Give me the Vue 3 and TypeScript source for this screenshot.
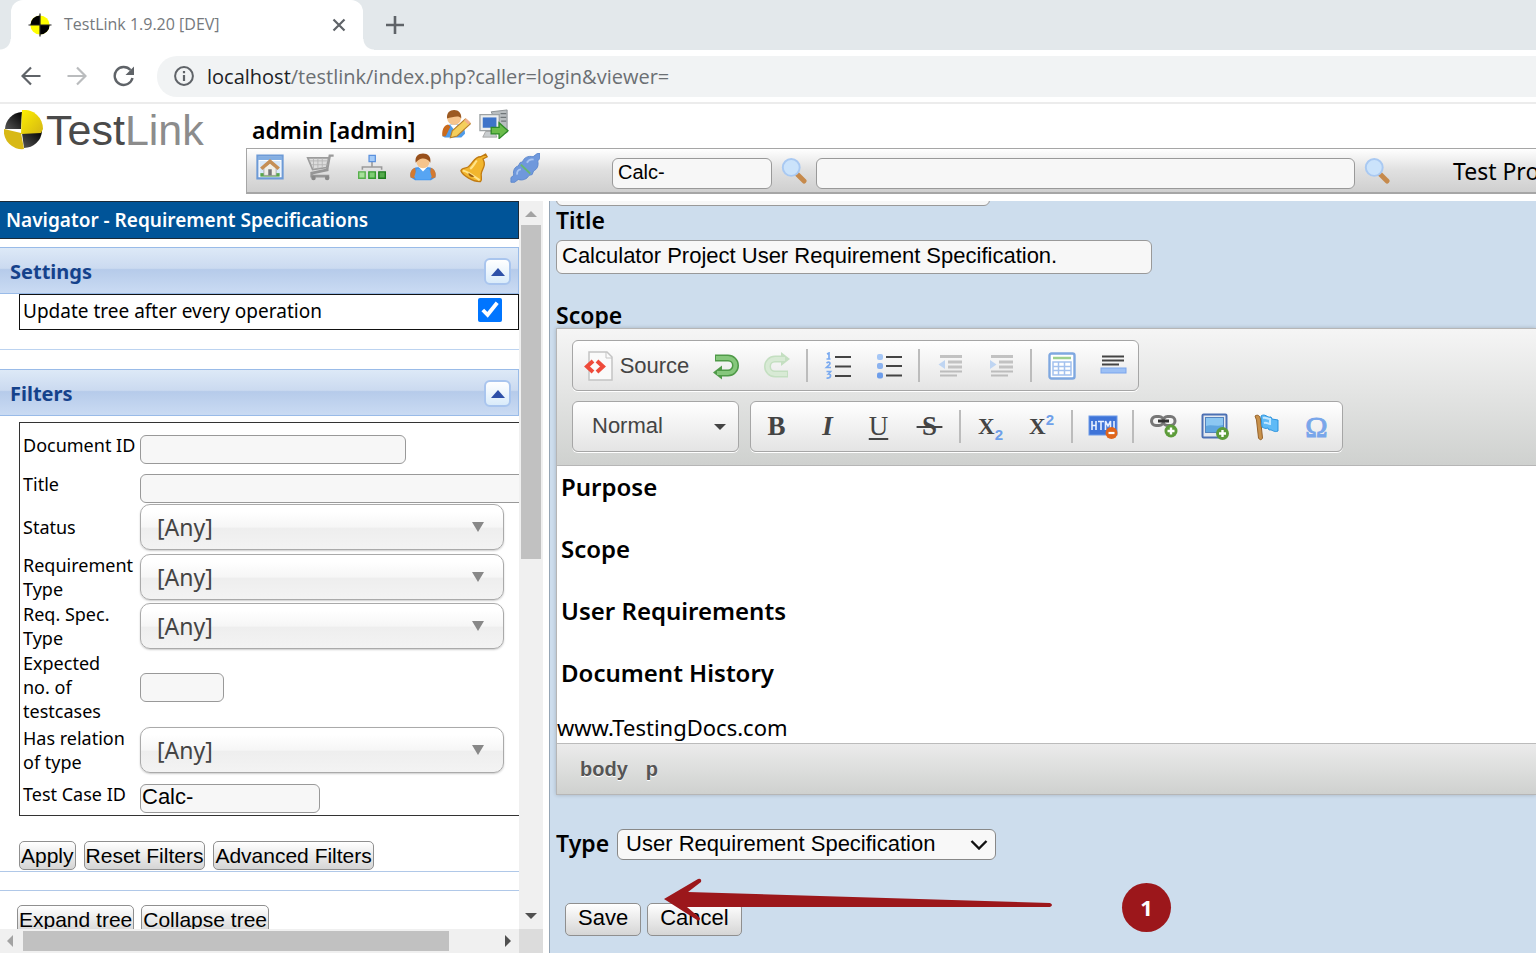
<script setup lang="ts">
import { ref } from 'vue'

interface FilterRow {
  id: string
  label: string
  kind: 'text' | 'select'
  size?: string
  tall?: boolean
}

const filterRows: FilterRow[] = [
  { id: 'doc-id', label: 'Document ID', kind: 'text', size: 'medium' },
  { id: 'req-title', label: 'Title', kind: 'text', size: 'wide' },
  { id: 'status', label: 'Status', kind: 'select' },
  { id: 'req-type', label: 'Requirement Type', kind: 'select' },
  { id: 'spec-type', label: 'Req. Spec. Type', kind: 'select' },
  { id: 'coverage', label: 'Expected no. of testcases', kind: 'text', size: 'tiny', tall: true },
  { id: 'relation', label: 'Has relation of type', kind: 'select' },
  { id: 'tc-id', label: 'Test Case ID', kind: 'text', size: 'small' },
]

const values = ref<Record<string, string>>({
  'doc-id': '', 'req-title': '', status: '[Any]', 'req-type': '[Any]',
  'spec-type': '[Any]', coverage: '', relation: '[Any]', 'tc-id': 'Calc-',
})

const updateTree = ref(true)
const quickSearch = ref('Calc-')
const fullSearch = ref('')
const docId = ref('')
const specTitle = ref('Calculator Project User Requirement Specification.')
const specType = ref('User Requirement Specification')
const headings = ['Purpose', 'Scope', 'User Requirements', 'Document History']
</script>

<template>
  <div class="page">
    <div class="tabstrip">
      <div class="tab">
        <svg class="favicon" viewBox="0 0 24 24" width="24" height="24">
          <circle cx="12" cy="12" r="9.6" fill="#ff0" />
          <path d="M12 12V2.4A9.6 9.6 0 0 0 2.4 12zM12 12v9.6a9.6 9.6 0 0 0 9.600-9.600z" fill="#000" />
          <path d="M12 .5v23M.5 12h23" stroke="#222" stroke-width="1.200" />
        </svg>
        <span class="tab-title">TestLink 1.9.20 [DEV]</span>
        <button class="bare" aria-label="Close tab">
          <svg viewBox="0 0 14 14" width="14" height="14"><path d="M1.500 1.500l11 11M12.500 1.500l-11 11" stroke="#5f6368" stroke-width="2.200" /></svg>
        </button>
      </div>
      <button class="bare new-tab" aria-label="New tab">
        <svg viewBox="0 0 18 18" width="18" height="18"><path d="M9 0v18M0 9h18" stroke="#5f6368" stroke-width="2.600" /></svg>
      </button>
    </div>

    <div class="addressbar">
      <button class="bare" aria-label="Back">
        <svg viewBox="0 0 20 20" width="20" height="20"><path d="M19.500 10H2M10 1.500L1.500 10l8.500 8.500" fill="none" stroke="#5f6368" stroke-width="2.200" /></svg>
      </button>
      <button class="bare" aria-label="Forward">
        <svg viewBox="0 0 20 20" width="20" height="20"><path d="M.5 10H18M10 1.500l8.500 8.500-8.500 8.500" fill="none" stroke="#babcbe" stroke-width="2.200" /></svg>
      </button>
      <button class="bare" aria-label="Reload">
        <svg viewBox="0 0 22 22" width="22" height="22">
          <path d="M17.500 5A9 9 0 1 0 19.500 13" fill="none" stroke="#5f6368" stroke-width="2.400" />
          <path d="M21 1.500V10h-8.500z" fill="#5f6368" />
        </svg>
      </button>
      <div class="omnibox">
        <svg viewBox="0 0 20 20" width="20" height="20">
          <circle cx="10" cy="10" r="8.900" fill="none" stroke="#5f6368" stroke-width="2" />
          <path d="M10 9v6M10 5v2.200" stroke="#5f6368" stroke-width="2.200" />
        </svg>
        <span class="url"><b>localhost</b>/testlink/index.php?caller=login&amp;viewer=</span>
      </div>
    </div>

    <header class="masthead">
      <div class="logo">
        <svg viewBox="0 0 40 40" width="40" height="40">
          <defs>
            <linearGradient id="lgY" x1="0" y1="0" x2="1" y2="1"><stop offset="0" stop-color="#fff000" /><stop offset="1" stop-color="#d3b514" /></linearGradient>
            <linearGradient id="lgK" x1="0" y1="1" x2="1" y2="0"><stop offset="0" stop-color="#555" /><stop offset="1" stop-color="#000" /></linearGradient>
          </defs>
          <path d="M17 19L18 2A18 18 0 0 0 1 19z" fill="url(#lgK)" />
          <path d="M18 23l20-2A18 18 0 0 1 20 38z" fill="url(#lgK)" />
          <path d="M18 0a19 19 0 0 1 21 19l-2 4-20 1z" fill="url(#lgY)" />
          <path d="M0 19l17 4 3 16A18 18 0 0 1 0 19z" fill="#d8b916" />
        </svg>
        <span class="wordmark">Test<i>Link</i></span>
      </div>
      <div class="head-main">
        <div class="who">
          <strong>admin [admin]</strong>
          <a href="#profile" aria-label="My settings">
            <svg viewBox="0 0 16 16" width="30" height="30">
              <path d="M.8 14.500c0-4 1.800-6.300 4.500-6.300h4c2 0 3.500 2 3.500 5l-2 2H2z" fill="#4f9be8" />
              <path d="M.8 14.500c-.6-3 .7-6 3-6.300l1.200 1.300-2.500 5z" fill="#c96a1c" />
              <path d="M5 8.500l2 2.500 2-2.500z" fill="#fff" />
              <circle cx="7" cy="4.800" r="3.700" fill="#f6c48c" />
              <path d="M3.200 5C3 2 4.600.5 7 .5s4 1.600 3.800 4.500C9.500 3 6 4.500 3.200 5z" fill="#9c5a22" />
              <path d="M5 15.300l1-3.700 7-6.200 2.600 2.500-7 6.500z" fill="#f5cf5c" stroke="#b9812c" stroke-width=".6" />
              <path d="M12.300 6l1.200-1 2.300 2.200-1.200 1.200z" fill="#f3b08a" />
            </svg>
          </a>
          <a href="#logout" aria-label="Logout">
            <svg viewBox="0 0 16 16" width="30" height="30">
              <path d="M6.500 1.500L15 .5v12l-3 1z" fill="#b9bec0" stroke="#8b9092" stroke-width=".5" />
              <path d="M11.500 2.500h3M11.500 4.500h3M11.800 6.500h2.700" stroke="#6f7678" stroke-width=".7" />
              <path d="M.5 3h10.300v8.500H.5z" fill="#eceeee" stroke="#9da2a4" stroke-width=".7" />
              <path d="M2 4.500h7.300V10H2z" fill="#3e74c9" />
              <path d="M3.500 12h5l1 3H2z" fill="#c9cdcf" stroke="#999" stroke-width=".4" />
              <path d="M6.500 9.800h4.200V7.300l4.800 4.300-4.800 4.200v-2.500H6.500z" fill="#6bbc4b" stroke="#2e8b28" stroke-width=".7" />
            </svg>
          </a>
        </div>
        <nav class="menubar">
          <a href="#home" aria-label="Home">
            <svg viewBox="0 0 16 16" width="28" height="28">
              <path d="M.8 1.500h14.400v13H.8z" fill="#fff" stroke="#6d9ad6" stroke-width="1.200" />
              <path d="M1 2h14v2H1z" fill="#83aee2" />
              <path d="M2 4.500h12v8.800H2z" fill="#d8e9fb" /><path d="M2.500 11.500h11v2h-11z" fill="#57a64a" />
              <path d="M4.500 8.500L8 5.500l3.500 3v4.300h-7z" fill="#f1efe8" stroke="#999" stroke-width=".4" />
              <path d="M3 9L8 4.800 13 9" fill="none" stroke="#c58f56" stroke-width="2" />
              <path d="M7 9.300h2v3.500H7z" fill="#777" />
            </svg>
          </a>
          <a href="#specification" aria-label="Test specification">
            <svg viewBox="0 0 16 16" width="29" height="28">
              <path d="M15.500 1.500h-2.200L11.800 9.500" fill="none" stroke="#9a9a9a" stroke-width="1.400" />
              <path d="M.7 2.800h12l-1.200 5.500-8 1.200z" fill="#dcdcdc" stroke="#9c9c9c" />
              <path d="M1.500 4.500h11M2.500 6.700h9.500M4 3v6M6.500 3v6M9 3v5.500" stroke="#b5b5b5" stroke-width=".5" />
              <path d="M12.500 9.500L3 11.500v1.700h10" fill="none" stroke="#969696" stroke-width="1.600" />
              <circle cx="4" cy="14.300" r="1.300" fill="#888" /><circle cx="11.800" cy="14.300" r="1.300" fill="#888" />
            </svg>
          </a>
          <a href="#plan" aria-label="Test plan tree">
            <svg viewBox="0 0 16 16" width="30" height="28">
              <path d="M8 5v3M2.500 9.500V8h11v1.500" fill="none" stroke="#9a9a9a" stroke-width=".9" />
              <path d="M6.300 1.300h3.600v3.600H6.300z" fill="#a4cbf8" stroke="#5b91dd" stroke-width=".7" />
              <path d="M.4 10.800h3.700v3.600H.4z" fill="#a9e09c" stroke="#57b04c" stroke-width=".8" />
              <path d="M6.200 10.800h3.700v3.600H6.200z" fill="#7fcc74" stroke="#349a2e" stroke-width=".8" />
              <path d="M11.900 10.800h3.700v3.600h-3.700z" fill="#55ab4c" stroke="#1d7a1c" stroke-width=".8" />
            </svg>
          </a>
          <a href="#users" aria-label="User management">
            <svg viewBox="0 0 16 16" width="28" height="28">
              <path d="M1 14c-.8-3 1-5.500 3.800-5.800h6.400C14 8.500 15.800 11 15 14l-2.500 1.500h-9z" fill="#4195ee" />
              <path d="M.9 14C.2 11.200 1.500 9 3.500 8.400L4 12l-.5 2.600zM15.100 14c.7-2.800-.6-5-2.600-5.600L12 12l.5 2.600z" fill="#d47a30" />
              <path d="M3 13.500L4.500 9h7l1.500 4.500-1 1.700H4z" fill="#57a5f3" />
              <path d="M5.500 8L8 10.500 10.500 8z" fill="#fff" />
              <circle cx="8" cy="4.900" r="3.800" fill="#f6c48c" />
              <path d="M3.800 5.500C3.300 2 5.200.3 8 .3s4.700 1.700 4.200 5.200C11 3.500 9 3 7.500 3.200 6 3.400 4.800 4.500 3.800 5.500z" fill="#98501b" />
            </svg>
          </a>
          <a href="#events" aria-label="Events">
            <svg viewBox="0 0 16 16" width="30" height="30">
              <path d="M14.200.6L11.500 2C8 2 7.500 5.500 5 7.300 3.500 8.300 1.300 8 1 9.500c1 2.500 6.500 6 10.500 5.700 1.200-1-.2-3 .5-4.800.8-2.500 2.500-4 .8-7.200L15 2z" fill="#f2b62d" stroke="#c07a12" stroke-width=".7" />
              <path d="M2 9.300c2 .3 6 3 9 5.200M9.500 4C8 6 7.500 7.300 6 8.500" fill="none" stroke="#ffe48a" stroke-width="1.100" />
              <path d="M5 10.500c0 2 2 2.700 3.200 2z" fill="#9b5d10" />
            </svg>
          </a>
          <a href="#plugins" aria-label="Plugins">
            <svg viewBox="0 0 16 16" width="30" height="30">
              <path d="M.5 15.600v-2.500l1.500-1.200c-.6-2.600.6-4.500 2.400-5L5.500 5l1.200-.2C7.300 2.500 9.800 1.300 12.300 2L14.500.3 16 .2v2.600l-1.200 1.400c.6 2.600-.4 4.600-2.200 5.300l-.8 2-1.700.4c-.8 2-3.500 3-5.700 2.200L2.500 15.600z" fill="#6f98dc" stroke="#5c87cd" stroke-width=".5" />
              <path d="M5.800 6.200l5 4.800" stroke="#66b871" stroke-width="1.100" />
              <path d="M9 5.200c.9-1.600 2.200-2 3.600-1.700M3.800 11.500c-.2-1.800.7-2.700 2-2.800" stroke="#a9c5f1" fill="none" />
            </svg>
          </a>
          <div class="searches">
            <input v-model="quickSearch" class="quick" aria-label="Test case identifier" />
            <button class="bare" aria-label="Search test case">
              <svg viewBox="0 0 16 16" width="26" height="26">
                <path d="M10 10l4.200 4.200" stroke="#c68a4c" stroke-width="3" stroke-linecap="round" />
                <circle cx="6.300" cy="5.800" r="5.200" fill="#cbe3fb" stroke="#a9c9f2" stroke-width="1.200" />
              </svg>
            </button>
            <input v-model="fullSearch" class="full" aria-label="Full text search" />
            <button class="bare" aria-label="Search text">
              <svg viewBox="0 0 16 16" width="26" height="26">
                <path d="M10 10l4.200 4.200" stroke="#c68a4c" stroke-width="3" stroke-linecap="round" />
                <circle cx="6.300" cy="5.800" r="5.200" fill="#cbe3fb" stroke="#a9c9f2" stroke-width="1.200" />
              </svg>
            </button>
          </div>
          <span class="project">Test Project</span>
        </nav>
      </div>
    </header>

    <main class="frames">
      <section class="nav-frame">
        <div class="nav-scroll">
          <h1>Navigator - Requirement Specifications</h1>
          <div class="panel-head">
            <h2>Settings</h2>
            <button aria-label="Collapse settings"><svg viewBox="0 0 14 8" width="14" height="8"><path d="M0 8l7-8 7 8z" fill="#2e50a8" /></svg></button>
          </div>
          <div class="settings-box">
            <label for="update-tree">Update tree after every operation</label>
            <input id="update-tree" v-model="updateTree" type="checkbox" />
          </div>
          <div class="panel-gap"></div>
          <div class="panel-head filters-head">
            <h2>Filters</h2>
            <button aria-label="Collapse filters"><svg viewBox="0 0 14 8" width="14" height="8"><path d="M0 8l7-8 7 8z" fill="#2e50a8" /></svg></button>
          </div>
          <div class="filter-box">
            <div v-for="row in filterRows" :key="row.id" class="frow" :class="[row.kind, { tall: row.tall }]">
              <label :for="row.id">{{ row.label }}</label>
              <input v-if="row.kind === 'text'" :id="row.id" v-model="values[row.id]" :class="row.size" />
              <div v-else class="chosen">
                <select :id="row.id" v-model="values[row.id]"><option>[Any]</option></select>
                <svg viewBox="0 0 12 10" width="12" height="10"><path d="M0 0h12L6 10z" fill="#888" /></svg>
              </div>
            </div>
          </div>
          <div class="actions">
            <button class="btn">Apply</button>
            <button class="btn">Reset Filters</button>
            <button class="btn">Advanced Filters</button>
          </div>
          <div class="tree-actions">
            <button class="btn">Expand tree</button>
            <button class="btn">Collapse tree</button>
          </div>
        </div>
        <div class="vbar">
          <svg viewBox="0 0 12 6" width="12" height="6"><path d="M0 6l6-6 6 6z" fill="#a3a3a3" /></svg>
          <div class="vthumb"></div>
          <svg viewBox="0 0 12 6" width="12" height="6"><path d="M0 0h12L6 6z" fill="#505050" /></svg>
        </div>
        <div class="hbar">
          <svg viewBox="0 0 6 12" width="6" height="12"><path d="M6 0v12L0 6z" fill="#a3a3a3" /></svg>
          <div class="htrack"><div class="hthumb"></div></div>
          <svg viewBox="0 0 6 12" width="6" height="12"><path d="M0 0v12l6-6z" fill="#505050" /></svg>
        </div>
        <div class="corner"></div>
      </section>

      <section class="work-frame">
        <input v-model="docId" class="field doc" aria-label="Document ID" />
        <label class="flabel" for="spec-title">Title</label>
        <input id="spec-title" v-model="specTitle" class="field title" />
        <span class="flabel scope">Scope</span>

        <div class="editor">
          <div class="tools">
            <div class="group">
              <button class="tool source">
                <svg viewBox="0 0 30 30" width="30" height="30">
                  <path d="M5 1h18l5 5v23H5z" fill="#fafafa" stroke="#c4c4c4" stroke-width="1.500" /><path d="M22 1v6h6" fill="none" stroke="#c4c4c4" />
                  <path d="M9 10l-6 5.500L9 21M13 10l6 5.500-6 5.500" fill="none" stroke="#ee4a3a" stroke-width="4" />
                </svg>
                <span>Source</span>
              </button>
              <button class="tool" aria-label="Undo">
                <svg viewBox="0 0 28 28" width="28" height="28">
                  <path d="M3 6h13a7.500 7.500 0 0 1 0 15H8" fill="none" stroke="#4f9a48" stroke-width="7" />
                  <path d="M10 13.500v14L1 20.500z" fill="#4f9a48" />
                  <path d="M4 6h12a7.500 7.500 0 0 1 0 15H5" fill="none" stroke="#86c77c" stroke-width="4" />
                </svg>
              </button>
              <button class="tool" aria-label="Redo">
                <svg viewBox="0 0 28 28" width="28" height="28">
                  <path d="M25 22H12a7.500 7.500 0 0 1 0-15h8" fill="none" stroke="#c4dfc1" stroke-width="7" />
                  <path d="M18 0v14l9-7z" fill="#c4dfc1" />
                  <path d="M24 22H12a7.500 7.500 0 0 1 0-15h10" fill="none" stroke="#d8ead5" stroke-width="4" />
                </svg>
              </button>
              <span class="sep"></span>
              <button class="tool" aria-label="Numbered list">
                <svg viewBox="0 0 28 28" width="28" height="28">
                  <path d="M11 5h16M11 14.500h16M11 24h16" stroke="#444" stroke-width="2.200" />
                  <path d="M3 2l2-1v6M2.500 7h4M2.500 11c3-2 4 0 3 1.500l-3 3H7M2.500 19.500h4L4.500 22c3-.2 3 4.500-2 4" fill="none" stroke="#7aaaf0" stroke-width="1.700" />
                </svg>
              </button>
              <button class="tool" aria-label="Bulleted list">
                <svg viewBox="0 0 28 28" width="28" height="28">
                  <path d="M11 5h16M11 14h16M11 23.500h16" stroke="#444" stroke-width="2.200" />
                  <rect x="2" y="2" width="6" height="6" rx="2" fill="#a6c7f6" /><rect x="2" y="11" width="6" height="6" rx="2" fill="#8bb2ef" /><rect x="2" y="20.500" width="6" height="6" rx="2" fill="#6d9dea" />
                </svg>
              </button>
              <span class="sep"></span>
              <button class="tool" aria-label="Decrease indent">
                <svg viewBox="0 0 28 28" width="28" height="28">
                  <path d="M4 4.500h22M12 10h14M12 15h14" stroke="#c2c2c2" stroke-width="3" /><path d="M4 19.500h22M4 23.500h17" stroke="#bcbcbc" stroke-width="2" /><path d="M9 8v9l-6.500-4.500z" fill="#bfd5f2" />
                </svg>
              </button>
              <button class="tool" aria-label="Increase indent">
                <svg viewBox="0 0 28 28" width="28" height="28">
                  <path d="M4 4.500h22M12 10h14M12 15h14" stroke="#c2c2c2" stroke-width="3" /><path d="M4 19.500h22M4 23.500h17" stroke="#bcbcbc" stroke-width="2" /><path d="M3 8v9l6.500-4.500z" fill="#bfd5f2" />
                </svg>
              </button>
              <span class="sep"></span>
              <button class="tool" aria-label="Table">
                <svg viewBox="0 0 28 28" width="28" height="28">
                  <rect x="1.500" y="1.500" width="25" height="25" rx="2" fill="#fff" stroke="#7fa8e0" stroke-width="2.400" />
                  <path d="M5 6h18" stroke="#9ed08f" stroke-width="2.500" />
                  <path d="M5 10h18v13H5zM5 14.500h18M5 18.500h18M10.500 10v13M16.500 10v13" fill="none" stroke="#a3c1ee" stroke-width="1.500" />
                </svg>
              </button>
              <button class="tool" aria-label="Horizontal line">
                <svg viewBox="0 0 28 28" width="28" height="28">
                  <path d="M3 4.500h22M3 8.500h22M3 12.500h17" stroke="#444" stroke-width="2.200" />
                  <rect x="2" y="16" width="25" height="5" fill="#9cc0f5" stroke="#7ba5ec" />
                </svg>
              </button>
            </div>
            <div class="tool-row">
              <div class="group format">
                <select aria-label="Paragraph format"><option>Normal</option></select>
                <svg viewBox="0 0 12 6" width="12" height="6"><path d="M0 0h12L6 6z" fill="#444" /></svg>
              </div>
              <div class="group">
                <button class="tool glyph"><b>B</b></button>
                <button class="tool glyph"><em>I</em></button>
                <button class="tool glyph"><u>U</u></button>
                <button class="tool glyph"><s>&thinsp;S&thinsp;</s></button>
                <span class="sep"></span>
                <button class="tool glyph"><b class="script">X<sub>2</sub></b></button>
                <button class="tool glyph"><b class="script">X<sup>2</sup></b></button>
                <span class="sep"></span>
                <button class="tool" aria-label="Remove format">
                  <svg viewBox="0 0 30 28" width="30" height="28">
                    <rect x="1" y="3" width="28" height="19" fill="#3f74d8" stroke="#6c9ae8" />
                    <path d="M4 8v9M8 8v9M4 12.500h4M10 8.500h6M13 8v9M17.500 17V8l2.500 5 2.500-5v9M26 8v9" fill="none" stroke="#e8f0ff" stroke-width="1.600" />
                    <circle cx="23.500" cy="20" r="6" fill="#e0651b" /><path d="M20.500 20h6" stroke="#fff" stroke-width="2.200" />
                  </svg>
                </button>
                <span class="sep"></span>
                <button class="tool" aria-label="Link">
                  <svg viewBox="0 0 28 28" width="28" height="28">
                    <rect x="1.500" y="3.500" width="12" height="9" rx="4.500" fill="none" stroke="#777" stroke-width="3" />
                    <rect x="13" y="3.500" width="12" height="9" rx="4.500" fill="none" stroke="#777" stroke-width="3" />
                    <path d="M8 8h11" stroke="#333" stroke-width="3" />
                    <circle cx="21" cy="18" r="6.500" fill="#5d9c3a" /><path d="M21 14.500v7M17.500 18h7" stroke="#fff" stroke-width="2.400" />
                  </svg>
                </button>
                <button class="tool" aria-label="Image">
                  <svg viewBox="0 0 28 28" width="28" height="28">
                    <rect x="1.500" y="1.500" width="24" height="23" rx="1" fill="#e4e8ef" stroke="#4c70b3" stroke-width="2" />
                    <rect x="4.500" y="4.500" width="18" height="15" fill="#8cc7f2" stroke="#5484bf" /><path d="M5 13c5-2 11 1 17-1v7H5z" fill="#5fa5df" />
                    <circle cx="21.500" cy="20.500" r="6.500" fill="#5d9c3a" /><path d="M21.500 17v7M18 20.500h7" stroke="#fff" stroke-width="2.400" />
                  </svg>
                </button>
                <button class="tool" aria-label="Anchor">
                  <svg viewBox="0 0 28 28" width="28" height="28">
                    <path d="M3 3c3-2 5 0 5.500 3l2 19c-1 2.500-3 2-4 0l-2-18z" fill="#c8914b" stroke="#96622a" />
                    <path d="M9 3c4-3 6 2 10 1l1 2 6 1v11c-4 2-6-2-9-1l-1-2c-3 1-4 0-6-1z" fill="#5fbaf6" stroke="#2a93de" />
                    <path d="M11 5c3-1 4 1 7 1v6M12 10c3-1 4 1 6 1" stroke="#c2e7ff" fill="none" stroke-width="2" />
                  </svg>
                </button>
                <button class="tool glyph omega" aria-label="Special character">Ω</button>
              </div>
            </div>
          </div>
          <article class="document">
            <h3 v-for="h in headings" :key="h">{{ h }}</h3>
            <p>www.TestingDocs.com</p>
          </article>
          <div class="path"><a href="#body">body</a><a href="#p">p</a></div>
        </div>

        <div class="type-row">
          <label for="spec-kind">Type</label>
          <div class="kind">
            <select id="spec-kind" v-model="specType"><option>User Requirement Specification</option></select>
            <svg viewBox="0 0 18 10" width="18" height="10"><path d="M1.500 1l7.500 7.500L16.500 1" fill="none" stroke="#111" stroke-width="2.400" /></svg>
          </div>
        </div>
        <div class="form-actions">
          <button class="btn big">Save</button>
          <button class="btn big">Cancel</button>
          <svg class="arrow" viewBox="0 0 392 44" width="392" height="44">
            <path d="M1 21L35 1q4-1 3 3L25 14l362 11q4 2 0 4H24l13 11q0 4-3 2z" fill="#9c171b" />
          </svg>
          <span class="step">1</span>
        </div>
      </section>
    </main>
  </div>
</template>

<style>
body { margin: 0; overflow: hidden; background: #fff; }
</style>

<style scoped>
* { box-sizing: border-box; }
.page { display: flex; flex-direction: column; height: 100vh; padding-bottom: 8px; overflow: hidden; font-family: "Noto Sans", "Open Sans", sans-serif; font-size: 18px; color: #000; }
svg { display: block; flex: none; }
.bare { display: flex; padding: 0; border: 0; background: none; }
input, select, button { font-family: "Liberation Sans", Arial, sans-serif; color: #000; }
h1, h2, h3, p { margin: 0; }

.tabstrip { display: flex; align-items: stretch; height: 50px; padding-left: 11px; background: #e3e8eb; flex: none; }
.tab { position: relative; display: flex; align-items: center; width: 352px; padding: 0 17px; background: #fff; border-radius: 12px 12px 0 0; }
.tab::before, .tab::after { position: absolute; bottom: 0; width: 11px; height: 11px; content: ""; }
.tab::before { right: 100%; background: radial-gradient(circle at 0 0, #e3e8eb 10px, #fff 11px); }
.tab::after { left: 100%; background: radial-gradient(circle at 100% 0, #e3e8eb 10px, #fff 11px); }
.tab-title { flex: 1; margin-left: 12px; padding-bottom: 3px; font: 16px "Open Sans", sans-serif; color: #75797d; }
.new-tab { align-items: center; margin-left: 23px; }

.addressbar { display: flex; align-items: center; gap: 26px; height: 54px; padding-left: 21px; border-bottom: 2px solid #ececec; flex: none; }
.omnibox { display: flex; flex: 1; align-items: center; gap: 13px; height: 41px; margin-left: -4px; padding-left: 17px; background: #f1f3f4; border-radius: 20px 0 0 20px; }
.url { font: 20px "Open Sans", sans-serif; color: #6b6f73; white-space: nowrap; }
.url b { font-weight: 400; color: #202124; }

.masthead { display: flex; height: 97px; padding-bottom: 7px; flex: none; }
.logo { display: flex; align-items: flex-start; width: 246px; padding: 6px 0 0 4px; flex: none; }
.wordmark { margin-left: 2px; font: 43px/40px "Liberation Sans", Arial, sans-serif; color: #4a4a4a; }
.wordmark i { font-style: normal; color: #8c8c8c; }
.head-main { display: flex; flex: 1; flex-direction: column; min-width: 0; }
.who { display: flex; align-items: center; gap: 8px; height: 44px; padding-left: 6px; }
.who strong { margin-right: 18px; padding-top: 8px; font-size: 23px; font-weight: 600; line-height: 32px; }
.who a { margin-bottom: 4px; }
.menubar { display: flex; height: 46px; padding-left: 8px; overflow: hidden; border: 1px solid #a6a6a6; border-right: 0; border-bottom-width: 2px; background: linear-gradient(#fff, #e0e0e0 50%, #cfcfcf); }
.menubar > a { display: flex; justify-content: center; width: 51px; padding-top: 4px; flex: none; }
.menubar > a:first-child { width: 30px; margin-right: 10px; }
.searches { display: flex; flex: 1; gap: 9px; margin-left: 62px; padding-top: 9px; }
.searches input { height: 31px; padding: 0 5px 2px; border: 1px solid #999; border-radius: 6px; background: #f7f7f7; font-size: 20px; min-width: 0; }
.quick { width: 160px; flex: none; }
.full { flex: 1; }
.searches .bare { width: 26px; }
.project { flex: none; width: 83px; margin-left: 63px; font-size: 23px; line-height: 44px; white-space: nowrap; }

.frames { display: grid; flex: 1; grid-template-columns: minmax(0, 543fr) minmax(0, 987fr); gap: 6px; min-height: 0; }
.nav-frame { display: grid; grid-template: minmax(0, 1fr) 24px / minmax(0, 1fr) 24px; min-height: 0; }
.nav-scroll { overflow: hidden; }
h1 { height: 38px; padding-left: 6px; border: 1px solid #1b2a38; border-left: 0; background: #005498; color: #fff; font-size: 19px; font-weight: 600; line-height: 37px; white-space: nowrap; }
.panel-head { display: flex; align-items: center; justify-content: space-between; height: 47px; margin-top: 8px; padding: 2px 7px 0 10px; border: 1px solid #99bbe8; border-width: 1px 1px 1px 0; background: linear-gradient(#dde9f7, #cbdaf0 45%, #b6cbea 48%, #cadbf3); }
.panel-head h2 { font-size: 20px; font-weight: 700; color: #15428b; }
.panel-head button { display: flex; align-items: center; justify-content: center; width: 27px; height: 27px; padding: 0; border: 2px solid #a9c5ee; border-radius: 6px; background: linear-gradient(#fff, #d9ebfa); }
.settings-box { display: flex; align-items: center; justify-content: space-between; height: 36px; margin-left: 19px; padding: 0 16px 2px 3px; border: 1px solid #111; }
.settings-box label { font-size: 19px; }
.settings-box input { width: 24px; height: 24px; margin: 0 0 2px; accent-color: #0075ff; }
.panel-gap { height: 20px; border-bottom: 1px solid #bcd3f0; }
.filters-head { margin-top: 19px; }
.filter-box { display: flex; flex-direction: column; width: 640px; height: 394px; margin: 6px 0 0 19px; padding: 0 0 3px 3px; border: 1px solid #333; }
.frow { display: grid; grid-template-columns: 115px 1fr; align-items: center; gap: 2px; height: 46px; margin-top: 3px; }
.frow.text { height: 29px; margin-top: 10px; }
.frow.text label { padding-bottom: 8px; }
.frow.tall { height: 72px; margin-top: 3px; }
.frow.tall label { padding: 0 12px 0 0; }
.frow label { font-size: 18px; line-height: 24px; }
.frow input { height: 29px; padding: 0 1px 3px; border: 1px solid #999; border-radius: 6px; background: #f7f7f7; font-size: 22px; }
.medium { width: 266px; }
.wide { width: 480px; }
.tiny { width: 84px; }
.small { width: 180px; }
.chosen, .kind { display: grid; align-items: center; }
.chosen select, .kind select { grid-area: 1 / 1; width: 100%; appearance: none; }
.chosen svg, .kind svg { grid-area: 1 / 1; justify-self: end; pointer-events: none; }
.chosen { width: 364px; }
.chosen select { height: 46px; padding: 0 16px; border: 1px solid #aaa; border-radius: 10px; background: linear-gradient(#fff 15%, #f6f6f6 50%, #eee 53%, #f3f3f3); box-shadow: 0 1px 2px #ccc; font-family: "Noto Sans", sans-serif; font-size: 23px; color: #444; }
.chosen svg { margin-right: 20px; }
.btn { height: 29px; padding: 0 1px; border: 1px solid #8f8f8f; border-radius: 5px; background: linear-gradient(#fff, #d5d5d5); font-size: 21px; line-height: 26px; white-space: nowrap; }
.actions { display: flex; gap: 8px; margin-top: 25px; padding: 0 0 1px 19px; border-bottom: 1px solid #b0c8e8; }
.tree-actions { display: flex; gap: 7px; margin-top: 18px; padding: 14px 0 0 17px; border-top: 1px solid #b0c8e8; }
.vbar { display: flex; flex-direction: column; align-items: center; justify-content: space-between; padding: 10px 2px; background: #f0f0f0; }
.vthumb { width: 20px; height: 334px; margin: 8px 0 auto; background: #c1c1c1; }
.hbar { display: flex; align-items: center; padding: 0 8px 0 7px; background: #f0f0f0; }
.htrack { flex: 1; margin: 0 9px 0 10px; }
.hthumb { width: 90%; height: 20px; background: #c1c1c1; }
.corner { background: #dcdcdc; }

.work-frame { display: flex; flex-direction: column; align-items: flex-start; padding-left: 6px; overflow: hidden; border-left: 1px solid #95a5b5; background: #cddded; white-space: nowrap; }
.work-frame > * { flex: none; }
.field { height: 34px; padding: 0 5px 2px; border: 1px solid #999; border-radius: 6px; background: #f7f7f7; font-size: 22px; }
.field.doc { width: 434px; margin-top: -29px; }
.field.title { width: 596px; max-width: 99%; }
.flabel { height: 34px; font-size: 23px; font-weight: 600; line-height: 29px; }
.flabel.scope { height: 27px; margin-top: 27px; }
.editor { width: 100%; border: 1px solid #b6b6b6; border-right: 0; box-shadow: 0 0 4px rgba(0, 0, 0, .2); }
.tools { display: flex; flex-direction: column; align-items: flex-start; gap: 10px; padding: 11px 15px 13px; border-bottom: 1px solid #b6b6b6; background: linear-gradient(#f5f5f5, #cfd1cf); }
.tool-row { display: flex; gap: 11px; }
.group { display: flex; align-items: center; height: 51px; border: 1px solid #a6a6a6; border-radius: 6px; background: linear-gradient(#fff, #e4e4e4); box-shadow: 0 1px 0 #fff; }
.tool { display: flex; align-items: center; justify-content: center; width: 51px; height: 49px; padding: 0; border: 0; background: none; color: #444; flex: none; }
.tool.source { gap: 6px; width: 127px; font-size: 22px; }
.sep { width: 2px; height: 33px; margin: 0 4px; background: #bcbcbc; }
.format { width: 167px; justify-content: space-between; padding: 0 12px 0 19px; }
.format select { width: 100px; padding: 0 0 2px; appearance: none; border: 0; background: none; font-size: 22px; color: #444; }
.glyph { font-family: "Liberation Serif", serif; font-size: 27px; }
.glyph em { font-weight: 700; }
.glyph u { text-decoration-thickness: 2px; text-underline-offset: 3px; }
.glyph s { font-weight: 700; text-decoration-thickness: 2px; }
.script { font-size: 23px; line-height: 23px; }
.script sub, .script sup { font-family: "Liberation Sans", sans-serif; font-size: 15px; line-height: 0; color: #6ea0ea; }
.omega { font-size: 30px; color: #79a6ea; -webkit-text-stroke: 1px #79a6ea; }
.document { height: 277px; overflow: hidden; background: #fff; }
.document h3 { padding: 4px 0 0 4px; margin-bottom: 24px; font-size: 24px; font-weight: 600; line-height: 34px; }
.document p { font-size: 22px; line-height: 26px; }
.path { display: flex; gap: 18px; height: 51px; padding-left: 23px; border-top: 1px solid #bbb; background: linear-gradient(#ebebeb, #cfd1cf); }
.path a { font: bold 20px/50px "Liberation Sans", sans-serif; color: #555; text-decoration: none; text-shadow: 0 1px 0 #fff; }
.type-row { display: flex; align-items: center; gap: 8px; height: 31px; margin-top: 34px; }
.type-row label { padding-bottom: 3px; font-size: 23px; font-weight: 600; line-height: 30px; }
.kind { width: 379px; }
.kind select { height: 31px; padding: 0 8px 2px; border: 1px solid #888; border-radius: 6px; background: #f8f8f8; font-size: 22px; }
.kind svg { margin-right: 8px; }
.form-actions { position: relative; display: flex; gap: 6px; margin-top: 43px; padding-left: 9px; }
.btn.big { height: 33px; padding: 0 12px 3px; font-size: 22px; }
.arrow { position: absolute; left: 107px; top: -25px; }
.step { position: absolute; left: 566px; top: -20px; width: 49px; height: 49px; border-radius: 50%; background: #9c171b; color: #fff; font-size: 22px; font-weight: 700; line-height: 48px; text-align: center; }
</style>
